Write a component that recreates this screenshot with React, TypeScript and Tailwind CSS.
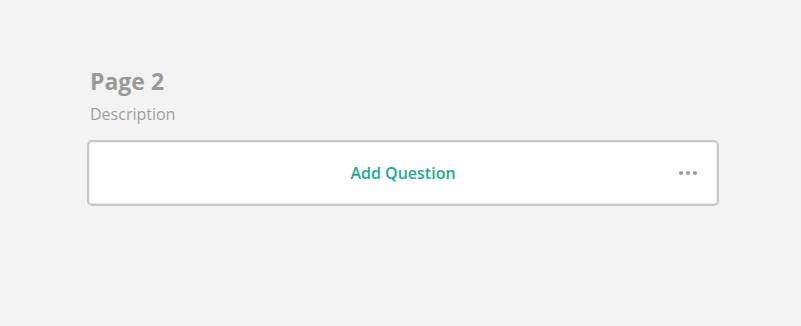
export default function App() {
  return (
    <div
      className="w-[801px] h-[326px] bg-[#f3f3f3] pt-[65px] pl-[87px]"
      style={{ fontFamily: '"Open Sans", "Noto Sans", sans-serif' }}
    >
      <div className="pl-[3px]">
        <h1 className="text-[23px] leading-[32px] font-bold text-[#999999]">Page 2</h1>
        <p className="mt-[6px] text-[16px] leading-[22px] text-[#a1a1a1]">Description</p>
      </div>
      <div className="mt-[15px] w-[632px] h-[66px] rounded-[5px] border-2 border-[#c9c9c9] bg-white shadow-[inset_0_0_0_1px_#ebebeb] flex items-center relative">
        <span className="flex-1 text-center text-[16px] font-semibold text-[#1bae8c]">Add Question</span>
        <div className="absolute right-[20px] top-1/2 -translate-y-1/2 flex gap-[3px]">
          <span className="w-[4px] h-[4px] rounded-full bg-[#9a9a9a]" />
          <span className="w-[4px] h-[4px] rounded-full bg-[#9a9a9a]" />
          <span className="w-[4px] h-[4px] rounded-full bg-[#9a9a9a]" />
        </div>
      </div>
    </div>
  );
}
